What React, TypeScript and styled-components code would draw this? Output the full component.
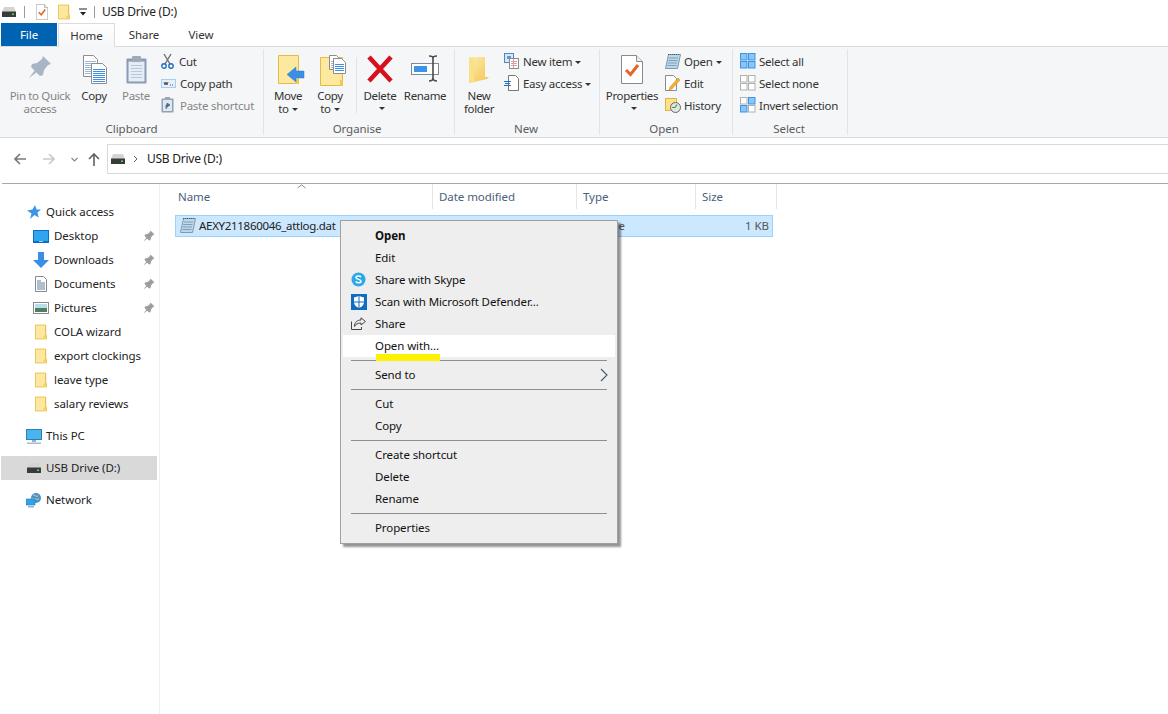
import React from "react";
import styled, { createGlobalStyle } from "styled-components";

const Global = createGlobalStyle`
  html, body { margin: 0; padding: 0; background: #fff; overflow: hidden; }
  body { font-family: "Noto Sans", "Open Sans", sans-serif; font-size: 11.5px; letter-spacing: -0.06px; color: #1a1a1a; }
  * { box-sizing: border-box; }
  svg { display: block; flex: none; }
`;

const Page = styled.div`
  position: relative; width: 1168px; height: 714px; display: flex; flex-direction: column; overflow: hidden; background: #fff;
`;
const TitleBar = styled.div`
  height: 23px; display: flex; align-items: center; padding-left: 2px; flex: none;
`;
const TitleSep = styled.div<{ $l: number; $r: number }>`
  width: 1px; height: 12px; background: #9a9a9a; margin: 0 ${p => p.$r}px 0 ${p => p.$l}px;
`;
const TitleIcon = styled.div<{ $r: number }>` margin-right: ${p => p.$r}px; `;
const TitleText = styled.span` font-size: 12px; letter-spacing: -0.25px; color: #222; `;
const Tabs = styled.div`
  height: 24px; display: flex; padding-left: 1px; flex: none; position: relative; z-index: 1;
`;
const FileTab = styled.div`
  width: 56px; height: 23px; background: #0063b1; color: #fff; display: flex; align-items: center; justify-content: center; margin-right: 1px;
`;
const Tab = styled.div<{ $active?: boolean; $w: number }>`
  width: ${p => p.$w}px; height: ${p => (p.$active ? 24 : 23)}px; display: flex; align-items: center; justify-content: center; color: #333;
  ${p => p.$active && "border: 1px solid #dadbdc; border-bottom: none; background: linear-gradient(#fff, #f5f6f7);"}
`;
const Ribbon = styled.div`
  height: 92px; flex: none; display: flex; background: #f5f6f7; border-top: 1px solid #dadbdc; border-bottom: 1px solid #dadbdc; margin-top: -1px;
`;
const Group = styled.div<{ $w: number }>`
  width: ${p => p.$w}px; margin: 2px 0; border-right: 1px solid #e2e3e4; display: flex; flex-direction: column; justify-content: space-between;
`;
const GroupBody = styled.div<{ $pad: number }>` display: flex; padding: 6px 0 0 ${p => p.$pad}px; `;
const GroupLabel = styled.div<{ $r?: number }>`
  color: #5c5c5c; text-align: center; line-height: 15px; margin-bottom: -1px; padding-right: ${p => p.$r ?? 0}px;
`;
const Big = styled.div<{ $w: number; $off?: boolean; $gap?: number }>`
  width: ${p => p.$w}px; margin-right: ${p => p.$gap ?? 2}px; display: flex; flex-direction: column; align-items: center; text-align: center; line-height: 13px; letter-spacing: -0.35px; color: ${p => (p.$off ? "#858585" : "#333")};
`;
const BigIcon = styled.div<{ $shift?: number }>`
  height: 34px; display: flex; justify-content: center; align-items: flex-start; padding-left: ${p => p.$shift ?? 0}px;
`;
const Line = styled.div` white-space: nowrap; `;
const Caret = styled.span`
  display: inline-block; width: 0; height: 0; border-left: 3px solid transparent; border-right: 3px solid transparent; border-top: 3px solid #333; vertical-align: middle; margin-left: 3px;
`;
const CaretLine = styled.div` height: 13px; display: flex; align-items: center; justify-content: center; `;
const VDivider = styled.div<{ $l: number; $r: number }>`
  width: 1px; height: 56px; margin: 2px ${p => p.$r}px 0 ${p => p.$l}px; background: #e2e3e4;
`;
const SmallCol = styled.div`
  display: flex; flex-direction: column; margin-top: -5px;
`;
const Small = styled.div<{ $off?: boolean; $gap: number }>`
  height: 22px; display: flex; align-items: center; gap: ${p => p.$gap}px; white-space: nowrap; letter-spacing: -0.27px; color: ${p => (p.$off ? "#858585" : "#333")};
`;
const AddressRow = styled.div`
  height: 46px; flex: none; padding: 6px 0 0 12px; display: flex; align-items: flex-start;
  border-bottom: 1px solid #a8a8a8; margin-left: 2px;
`;
const Nav = styled.div`
  height: 30px; display: flex; align-items: center;
`;
const NavButton = styled.div<{ $w: number }>` width: ${p => p.$w}px; `;
const AddressBox = styled.div`
  flex: 1; height: 30px; border: 1px solid #d9d9d9; border-right: none; display: flex; align-items: center; padding-left: 3px; gap: 8px;
`;
const Crumb = styled.span` font-size: 12px; letter-spacing: -0.25px; color: #222; margin-left: 1px; padding-bottom: 2px; `;
const Body = styled.div` flex: 1; display: flex; min-height: 0; `;
const Sidebar = styled.div`
  width: 160px; flex: none; border-right: 1px solid #efefef; padding-top: 16px; display: flex; flex-direction: column;
`;
const NavRow = styled.div<{ $level: number; $sel?: boolean; $top?: number }>`
  height: 24px; width: 156px; margin-left: 1px; margin-top: ${p => p.$top ?? 0}px; display: flex; align-items: center;
  padding-left: ${p => (p.$level === 2 ? 32 : 25)}px; gap: ${p => (p.$level === 2 ? 5 : 4)}px; padding-right: 2px;
  color: #222; background: ${p => (p.$sel ? "#d9d9d9" : "transparent")};
`;
const NavIcon = styled.div` width: 16px; display: flex; justify-content: center; `;
const NavText = styled.span` flex: 1; white-space: nowrap; padding-bottom: 2px; `;
const Main = styled.div` flex: 1; min-width: 0; `;
const Header = styled.div` display: flex; height: 25px; padding-left: 12px; `;
const HeadCell = styled.div<{ $w: number }>`
  width: ${p => p.$w}px; height: 25px; border-right: 1px solid #e5e5e5; padding-left: 6px; display: flex; align-items: center; color: #4c607a; position: relative;
`;
const SortMark = styled.svg` position: absolute; left: 125px; top: 0; `;
const FileRow = styled.div`
  margin: 6px 0 0 15px; width: 598px; height: 22px; background: #cce8ff; border: 1px solid #99d1ff; display: flex; align-items: center; color: #333;
`;
const NameCell = styled.div` width: 258px; padding: 0 0 2px 4px; display: flex; align-items: center; gap: 3px; color: #222; letter-spacing: -0.3px; `;
const DateCell = styled.div` width: 149px; `;
const TypeCell = styled.div` width: 110px; color: #555; padding-bottom: 2px; `;
const SizeCell = styled.div` flex: 1; text-align: right; padding: 0 3px 2px 0; color: #555; `;
const Menu = styled.div`
  position: absolute; left: 340px; top: 220px; width: 278px; height: 324px; background: #eee; border: 1px solid #a0a0a0; padding: 4px 2px; box-shadow: 3px 3px 2px rgba(0,0,0,.42); z-index: 5;
`;
const MenuItem = styled.div<{ $hot?: boolean; $bold?: boolean }>`
  height: 22px; position: relative; display: flex; align-items: center; padding: 0 0 2px 32px; color: #111; letter-spacing: -0.1px;
  font-weight: ${p => (p.$bold ? 700 : 400)}; background: ${p => (p.$hot ? "#fff" : "transparent")};
`;
const MenuIcon = styled.div<{ $top: number }>` position: absolute; left: 8px; top: ${p => p.$top}px; `;
const MenuArrow = styled.svg` position: absolute; right: 7px; top: 4px; `;
const MenuSep = styled.div`
  height: 7px; margin: 0 8px; position: relative;
  &::after { content: ""; position: absolute; left: 0; right: 0; top: 3px; height: 1px; background: #8f8f8f; }
`;
const Marker = styled.div`
  position: absolute; left: 33px; top: 19px; width: 64px; height: 7px; background: #fff200; z-index: 1;
`;

const Drive = () => (
  <svg width="14" height="10" viewBox="0 0 14 10">
    <path d="M2 0h10l2 5H0z" fill="#d4d4d4" />
    <rect y="4.5" width="14" height="5.5" rx=".5" fill="#3a3a3a" />
    <rect x="10" y="6.5" width="2" height="1.5" fill="#4fe04f" />
  </svg>
);
const Folder = ({ w = 12, h = 16 }: { w?: number; h?: number }) => (
  <svg width={w} height={h} viewBox="0 0 13 16">
    <path d="M.5.5h11v11h1v4H.5z" fill="#fde8a0" stroke="#e8c04f" />
    <path d="M11.5 11.5v-11" stroke="#e8c04f" />
    <rect x="9" y="12" width="3" height="3" fill="#f6d365" />
  </svg>
);
const CheckDoc = ({ big }: { big?: boolean }) => (
  <svg width={big ? 22 : 12} height={big ? 29 : 16} viewBox="0 0 22 29">
    <path d="M.5.5h15l6 6v22H.5z" fill="#fff" stroke="#8a8a8a" />
    <path d="M15.5.5v6h6" fill="#eee" stroke="#8a8a8a" />
    <path d="M5 15l4.5 4.5L17 10" fill="none" stroke="#e8632a" strokeWidth="3" />
  </svg>
);
const Pin = () => (
  <svg width="24" height="24" viewBox="0 0 24 24">
    <path d="M15 1l8 8-3 1-4 5-1 5-3 1-9-9 1-3 5-1 5-4z" fill="#a9b5c6" />
    <path d="M7 15l-6 8 8-6z" fill="#a9b5c6" />
  </svg>
);
const PinSmall = () => (
  <svg width="12" height="12" viewBox="0 0 24 24">
    <path d="M15 1l8 8-3 1-4 5-1 5-3 1-9-9 1-3 5-1 5-4z" fill="#9d9d9d" />
    <path d="M7 15l-6 8 8-6z" fill="#9d9d9d" />
  </svg>
);
const Sheet = ({ x, y, w, h, c }: { x: number; y: number; w: number; h: number; c: string }) => {
  const rows: number[] = [];
  for (let n = 6; n < h - 2; n += 2) rows.push(n);
  return (
    <g>
      <path d={`M${x + .5} ${y + .5}h${w - 5}l4 4v${h - 5}h-${w - 1}z`} fill="#fff" stroke="#8d8d8d" />
      {rows.map(n => <path key={n} d={`M${x + 2} ${y + n + .5}h${w - 4}`} stroke={c} />)}
    </g>
  );
};
const CopyIcon = () => (
  <svg width="24" height="29" viewBox="0 0 24 29">
    <Sheet x={0} y={0} w={15} h={22} c="#9fb6d8" />
    <Sheet x={8} y={8} w={16} h={21} c="#3f8fe8" />
  </svg>
);
const PasteIcon = () => (
  <svg width="21" height="29" viewBox="0 0 21 29">
    <rect x=".5" y="3.5" width="20" height="25" rx="1" fill="#8b9bb4" />
    <rect x="2.5" y="6.5" width="16" height="20" fill="#e4ecf6" />
    <rect x="6" y="1" width="9" height="6" rx="1" fill="#a1a9b5" />
    {[10, 13, 16, 19, 22].map(n => <path key={n} d={`M5 ${n + .5}h11`} stroke="#b7c6da" />)}
  </svg>
);
const Scissors = () => (
  <svg width="13" height="16" viewBox="0 0 13 16" fill="none">
    <path d="M3 1l6 10M10 1L4 11" stroke="#6f6f6f" strokeWidth="1.4" />
    <circle cx="3" cy="13" r="2.2" stroke="#1f6fc4" strokeWidth="1.4" />
    <circle cx="10" cy="13" r="2.2" stroke="#1f6fc4" strokeWidth="1.4" />
  </svg>
);
const CopyPath = () => (
  <svg width="15" height="9" viewBox="0 0 15 9">
    <rect width="15" height="9" fill="#a9cdf2" />
    <rect x="1" y="1" width="13" height="7" fill="#e5f0fb" />
    <path d="M3 3l1 3 1-3 1 3 1-3M9 6h1M11 6h1" stroke="#333" strokeWidth=".8" fill="none" />
  </svg>
);
const PasteShort = () => (
  <svg width="13" height="16" viewBox="0 0 13 16">
    <rect x=".5" y="1.5" width="12" height="14" rx="1" fill="#8fa0b8" />
    <rect x="2" y="3" width="9" height="11" fill="#e2e8f0" />
    <rect x="4" y="0" width="5" height="3" fill="#9aa5b5" />
    <path d="M5 12V8h3M6 6l3 2-3 2z" fill="#4f6b8f" stroke="#4f6b8f" strokeWidth=".8" />
  </svg>
);
const MoveTo = () => (
  <svg width="27" height="29" viewBox="0 0 27 29">
    <path d="M.5.5h20v28H.5z" fill="#fde8a0" stroke="#e6bb45" />
    <path d="M18 24h3v5h-3z" fill="#f2c94c" />
    <path d="M18 12l-9 7.500 9 7.500v-4h8v-7h-8z" fill="#3a8ee6" stroke="#2f7fd0" strokeWidth=".5" />
  </svg>
);
const CopyTo = () => (
  <svg width="27" height="31" viewBox="0 0 27 31">
    <path d="M.5 2.500h22v28H.5z" fill="#fde8a0" stroke="#e6bb45" />
    <rect x="20" y="25" width="3" height="6" fill="#f2c94c" />
    <Sheet x={9} y={0} w={12} h={15} c="#9fb6d8" />
    <Sheet x={13} y={3} w={13} h={16} c="#3f8fe8" />
  </svg>
);
const RedX = () => (
  <svg width="26" height="28" viewBox="0 0 26 28">
    <path d="M2 2l22 24M24 2L2 26" stroke="#d80f1f" strokeWidth="4.6" />
  </svg>
);
const RenameIcon = () => (
  <svg width="29" height="27" viewBox="0 0 29 27">
    <rect x=".5" y="8.5" width="27" height="11" fill="#fff" stroke="#7f8b99" />
    <rect x="3" y="11" width="13" height="6" fill="#3a94e8" />
    <path d="M18 1c3 0 4 1 4 2 0-1 1-2 4-2M22 3v20M18 26c3 0 4-1 4-3 0 2 1 3 4 3" fill="none" stroke="#4a4a4a" strokeWidth="1.6" />
  </svg>
);
const NewFolder = () => (
  <svg width="20" height="28" viewBox="0 0 20 28">
    <defs><linearGradient id="nf" x1="0" y1="0" x2="1" y2="1"><stop offset="0" stopColor="#fdeeb0" /><stop offset="1" stopColor="#f2c44f" /></linearGradient></defs>
    <path d="M0 2h16v20h4l-2 2-13 3-5 1z" fill="url(#nf)" />
    <path d="M0 2l5 2v24l-5-4z" fill="#fbe08a" />
  </svg>
);
const NewItem = () => (
  <svg width="15" height="16" viewBox="0 0 15 16">
    <rect x=".5" y=".5" width="9" height="9" fill="#d5e7fa" stroke="#5b84b1" />
    <rect x="3" y="3" width="4" height="3" fill="#5b9ae0" />
    <rect x="5.5" y="5.500" width="9" height="10" fill="#fff" stroke="#8a8a8a" />
    <path d="M7 8.500h6M7 10.500h6M7 12.500h6M9.500 6v9" stroke="#d8a0a0" />
  </svg>
);
const EasyAccess = () => (
  <svg width="15" height="16" viewBox="0 0 15 16">
    <path d="M4.500.5h7l3 3v12h-10z" fill="#fff" stroke="#777" />
    <path d="M0 6.500h7M1 8.500h5M0 10.500h7" stroke="#1f6fc4" />
  </svg>
);
const Notepad = () => (
  <svg width="16" height="16" viewBox="0 0 16 16">
    <path d="M3.500 1.500h12l-3 14H.5z" fill="#bcd6ea" stroke="#7f98ad" />
    <path d="M3 1.500h12" stroke="#555" strokeDasharray="1 1" />
    <path d="M4 5h9M3.400 7.500h9M2.900 10h9M2.400 12.500h9" stroke="#7f9fbc" />
  </svg>
);
const EditIcon = () => (
  <svg width="15" height="16" viewBox="0 0 15 16">
    <path d="M.5.5h8l3 3v12H.5z" fill="#fff" stroke="#8a8a8a" />
    <path d="M13 3l2 2-8 9-3 1 1-3z" fill="#f0b030" stroke="#d08a15" strokeWidth=".5" />
  </svg>
);
const HistoryIcon = () => (
  <svg width="16" height="16" viewBox="0 0 16 16">
    <rect x=".5" y="1.500" width="11" height="12" fill="#fde08a" stroke="#e0b53c" />
    <circle cx="10.500" cy="10.500" r="5" fill="#dfe6df" stroke="#6a6a6a" />
    <path d="M7 10.500l3 0 2-3" fill="none" stroke="#4a9a3a" strokeWidth="1.200" />
  </svg>
);
const Squares = ({ a, b, c, d }: { a: boolean; b: boolean; c: boolean; d: boolean }) => {
  const s = (x: number, y: number, on: boolean) => (
    <rect x={x + .5} y={y + .5} width="6.500" height="6.500" fill={on ? "#8cc4f5" : "#fff"} stroke={on ? "#3a94e8" : "#b0b0b0"} />
  );
  return <svg width="16" height="16" viewBox="0 0 16 16">{s(0, 0, a)}{s(8, 0, b)}{s(0, 8, c)}{s(8, 8, d)}</svg>;
};
const BackArrow = ({ c }: { c: string }) => (
  <svg width="12" height="12" viewBox="0 0 12 12" fill="none"><path d="M6 1L1 6l5 5M1 6h11" stroke={c} strokeWidth="1.600" /></svg>
);
const FwdArrow = ({ c }: { c: string }) => (
  <svg width="12" height="12" viewBox="0 0 12 12" fill="none"><path d="M6 1l5 5-5 5M11 6H0" stroke={c} strokeWidth="1.600" /></svg>
);
const UpArrow = () => (
  <svg width="12" height="13" viewBox="0 0 12 13" fill="none"><path d="M1 6l5-5 5 5M6 1v12" stroke="#606060" strokeWidth="1.600" /></svg>
);
const Chevron = () => (
  <svg width="7" height="5" viewBox="0 0 7 5" fill="none"><path d="M.5 1L3.500 4l3-3" stroke="#8a8a8a" strokeWidth="1.200" /></svg>
);
const CrumbArrow = () => (
  <svg width="5" height="8" viewBox="0 0 5 8" fill="none"><path d="M1 1l3 3-3 3" stroke="#666" /></svg>
);
const Star = () => (
  <svg width="14" height="14" viewBox="0 0 14 14"><path d="M8 0l1.600 4.500H14l-3.500 3 1.200 5L7.500 10 3 14l1.500-5.500L0 5.500l5.500-1z" fill="#3a94e8" /></svg>
);
const Desktop = () => (
  <svg width="16" height="13" viewBox="0 0 16 13"><rect width="16" height="13" fill="#0a6fc4" /><rect x="1" y="1" width="14" height="10" fill="#2fa4f0" /><rect x="6" y="11" width="4" height="1" fill="#9cd0f5" /></svg>
);
const Down = () => (
  <svg width="16" height="16" viewBox="0 0 16 16"><path d="M5 0h6v8h5l-8 8-8-8h5z" fill="#3a8ee6" /></svg>
);
const Docs = () => (
  <svg width="12" height="16" viewBox="0 0 12 16"><path d="M.5.5h8l3 3v12H.5z" fill="#fff" stroke="#8a8a8a" /><path d="M2 5h4M2 7h8M2 9h8M2 11h8M2 13h8" stroke="#5f7f9f" /></svg>
);
const Pictures = () => (
  <svg width="16" height="12" viewBox="0 0 16 12"><rect x=".5" y=".5" width="15" height="11" fill="#fff" stroke="#8a8a8a" /><rect x="2" y="2" width="12" height="4" fill="#b9dcea" /><rect x="2" y="6" width="12" height="4" fill="#4f7f5f" /></svg>
);
const PC = () => (
  <svg width="16" height="15" viewBox="0 0 16 15"><rect x=".5" y=".5" width="15" height="10" fill="#49b4ee" stroke="#2a80b8" /><rect x="6" y="11" width="4" height="2" fill="#8fb4cc" /><rect x="1" y="13.500" width="14" height="1.500" fill="#a8bccb" /></svg>
);
const Network = () => (
  <svg width="16" height="15" viewBox="0 0 16 15"><circle cx="10" cy="5" r="5" fill="#4f8fc8" /><path d="M7 2c2 0 3 2 5 1M6 6c2-1 4 1 7 0" stroke="#bfe0a0" fill="none" /><rect y="6" width="9" height="6" fill="#2fa4e8" stroke="#1f7ab8" strokeWidth=".6" /><rect x="2" y="13" width="6" height="1.500" fill="#8fb4cc" /></svg>
);
const Skype = () => (
  <svg width="15" height="15" viewBox="0 0 15 15">
    <circle cx="7.500" cy="7.500" r="7" fill="#2aa8e8" />
    <path d="M10 5c-1-1.500-5-1.500-5 .5 0 2.500 5 1.200 5 3.800 0 2-4 2-5.200.2" fill="none" stroke="#fff" strokeWidth="1.500" />
  </svg>
);
const Defender = () => (
  <svg width="16" height="16" viewBox="0 0 16 16">
    <rect width="16" height="16" fill="#0f6cc4" />
    <path d="M8 2l5 1.500V8c0 3-2 5-5 6-3-1-5-3-5-6V3.500z" fill="#fff" />
    <path d="M8 2v12M3 8h10" stroke="#0f6cc4" />
  </svg>
);
const ShareIcon = () => (
  <svg width="15" height="13" viewBox="0 0 15 13" fill="none" stroke="#444">
    <path d="M10 .8l4.400 3.700L10 8V6C6.500 6 4.500 7.500 3.500 9.500 3.500 5.500 6 3 10 3z" />
    <path d="M.5 4.500v8h10V10" />
  </svg>
);

const Caretted = ({ children }: { children: React.ReactNode }) => <Line>{children}<Caret /></Line>;

export default function App() {
  return (
    <Page>
      <Global />
      <TitleBar>
        <TitleIcon $r={0}><Drive /></TitleIcon>
        <TitleSep $l={8} $r={11} />
        <TitleIcon $r={10}><CheckDoc /></TitleIcon>
        <TitleIcon $r={9}><Folder /></TitleIcon>
        <TitleIcon $r={7}>
          <svg width="8" height="8" viewBox="0 0 8 8"><path d="M0 1h8" stroke="#222" /><path d="M1 4h6L4 7.500z" fill="#222" /></svg>
        </TitleIcon>
        <TitleSep $l={0} $r={7} />
        <TitleText>USB Drive (D:)</TitleText>
      </TitleBar>
      <Tabs>
        <FileTab>File</FileTab>
        <Tab $active $w={57}>Home</Tab>
        <Tab $w={58}>Share</Tab>
        <Tab $w={56}>View</Tab>
      </Tabs>
      <Ribbon>
        <Group $w={264}>
          <GroupBody $pad={8}>
            <Big $w={64} $off><BigIcon><Pin /></BigIcon><Line>Pin to Quick</Line><Line>access</Line></Big>
            <Big $w={40}><BigIcon $shift={1}><CopyIcon /></BigIcon><Line>Copy</Line></Big>
            <Big $w={40} $off $gap={5}><BigIcon><PasteIcon /></BigIcon><Line>Paste</Line></Big>
            <SmallCol>
              <Small $gap={5}><Scissors />Cut</Small>
              <Small $gap={4}><CopyPath />Copy path</Small>
              <Small $off $gap={6}><PasteShort />Paste shortcut</Small>
            </SmallCol>
          </GroupBody>
          <GroupLabel>Clipboard</GroupLabel>
        </Group>
        <Group $w={191}>
          <GroupBody $pad={4}>
            <Big $w={40}><BigIcon $shift={6}><MoveTo /></BigIcon><Line>Move</Line><Caretted>to</Caretted></Big>
            <Big $w={40} $gap={0}><BigIcon $shift={6}><CopyTo /></BigIcon><Line>Copy</Line><Caretted>to</Caretted></Big>
            <VDivider $l={6} $r={3} />
            <Big $w={40}><BigIcon><RedX /></BigIcon><Line>Delete</Line><CaretLine><Caret /></CaretLine></Big>
            <Big $w={46}><BigIcon><RenameIcon /></BigIcon><Line>Rename</Line></Big>
          </GroupBody>
          <GroupLabel $r={4}>Organise</GroupLabel>
        </Group>
        <Group $w={145}>
          <GroupBody $pad={4}>
            <Big $w={40} $gap={5}><BigIcon><NewFolder /></BigIcon><Line>New</Line><Line>folder</Line></Big>
            <SmallCol>
              <Small $gap={4}><NewItem /><Caretted>New item</Caretted></Small>
              <Small $gap={4}><EasyAccess /><Caretted>Easy access</Caretted></Small>
            </SmallCol>
          </GroupBody>
          <GroupLabel $r={2}>New</GroupLabel>
        </Group>
        <Group $w={133}>
          <GroupBody $pad={4}>
            <Big $w={56} $gap={5}><BigIcon><CheckDoc big /></BigIcon><Line>Properties</Line><CaretLine><Caret /></CaretLine></Big>
            <SmallCol>
              <Small $gap={3}><Notepad /><Caretted>Open</Caretted></Small>
              <Small $gap={4}><EditIcon />Edit</Small>
              <Small $gap={3}><HistoryIcon />History</Small>
            </SmallCol>
          </GroupBody>
          <GroupLabel $r={4}>Open</GroupLabel>
        </Group>
        <Group $w={115}>
          <GroupBody $pad={7}>
            <SmallCol>
              <Small $gap={3}><Squares a b c d />Select all</Small>
              <Small $gap={3}><Squares a={false} b={false} c={false} d={false} />Select none</Small>
              <Small $gap={3}><Squares a={false} b c d={false} />Invert selection</Small>
            </SmallCol>
          </GroupBody>
          <GroupLabel $r={2}>Select</GroupLabel>
        </Group>
      </Ribbon>
      <AddressRow>
        <Nav>
          <NavButton $w={29}><BackArrow c="#7a7a7a" /></NavButton>
          <NavButton $w={28}><FwdArrow c="#c9c9c9" /></NavButton>
          <NavButton $w={17}><Chevron /></NavButton>
          <NavButton $w={19}><UpArrow /></NavButton>
        </Nav>
        <AddressBox>
          <Drive />
          <CrumbArrow />
          <Crumb>USB Drive (D:)</Crumb>
        </AddressBox>
      </AddressRow>
      <Body>
        <Sidebar>
          <NavRow $level={1}><NavIcon><Star /></NavIcon><NavText>Quick access</NavText></NavRow>
          <NavRow $level={2}><NavIcon><Desktop /></NavIcon><NavText>Desktop</NavText><PinSmall /></NavRow>
          <NavRow $level={2}><NavIcon><Down /></NavIcon><NavText>Downloads</NavText><PinSmall /></NavRow>
          <NavRow $level={2}><NavIcon><Docs /></NavIcon><NavText>Documents</NavText><PinSmall /></NavRow>
          <NavRow $level={2}><NavIcon><Pictures /></NavIcon><NavText>Pictures</NavText><PinSmall /></NavRow>
          <NavRow $level={2}><NavIcon><Folder /></NavIcon><NavText>COLA wizard</NavText></NavRow>
          <NavRow $level={2}><NavIcon><Folder /></NavIcon><NavText>export clockings</NavText></NavRow>
          <NavRow $level={2}><NavIcon><Folder /></NavIcon><NavText>leave type</NavText></NavRow>
          <NavRow $level={2}><NavIcon><Folder /></NavIcon><NavText>salary reviews</NavText></NavRow>
          <NavRow $level={1} $top={8}><NavIcon><PC /></NavIcon><NavText>This PC</NavText></NavRow>
          <NavRow $level={1} $top={8} $sel><NavIcon><Drive /></NavIcon><NavText>USB Drive (D:)</NavText></NavRow>
          <NavRow $level={1} $top={8}><NavIcon><Network /></NavIcon><NavText>Network</NavText></NavRow>
        </Sidebar>
        <Main>
          <Header>
            <HeadCell $w={261}>
              Name
              <SortMark width="9" height="5" viewBox="0 0 9 5" fill="none"><path d="M.5 4L4.500.8 8.500 4" stroke="#8a8a8a" /></SortMark>
            </HeadCell>
            <HeadCell $w={144}>Date modified</HeadCell>
            <HeadCell $w={119}>Type</HeadCell>
            <HeadCell $w={81}>Size</HeadCell>
          </Header>
          <FileRow>
            <NameCell><Notepad />AEXY211860046_attlog.dat</NameCell>
            <DateCell />
            <TypeCell>DAT File</TypeCell>
            <SizeCell>1 KB</SizeCell>
          </FileRow>
        </Main>
      </Body>
      <Menu>
        <MenuItem $bold>Open</MenuItem>
        <MenuItem>Edit</MenuItem>
        <MenuItem><MenuIcon $top={3}><Skype /></MenuIcon>Share with Skype</MenuItem>
        <MenuItem><MenuIcon $top={3}><Defender /></MenuIcon>Scan with Microsoft Defender...</MenuItem>
        <MenuItem><MenuIcon $top={4}><ShareIcon /></MenuIcon>Share</MenuItem>
        <MenuItem $hot>Open with...<Marker /></MenuItem>
        <MenuSep />
        <MenuItem>
          Send to
          <MenuArrow width="8" height="14" viewBox="0 0 8 14" fill="none"><path d="M1 1l6 6-6 6" stroke="#44586e" strokeWidth="1.100" /></MenuArrow>
        </MenuItem>
        <MenuSep />
        <MenuItem>Cut</MenuItem>
        <MenuItem>Copy</MenuItem>
        <MenuSep />
        <MenuItem>Create shortcut</MenuItem>
        <MenuItem>Delete</MenuItem>
        <MenuItem>Rename</MenuItem>
        <MenuSep />
        <MenuItem>Properties</MenuItem>
      </Menu>
    </Page>
  );
}
